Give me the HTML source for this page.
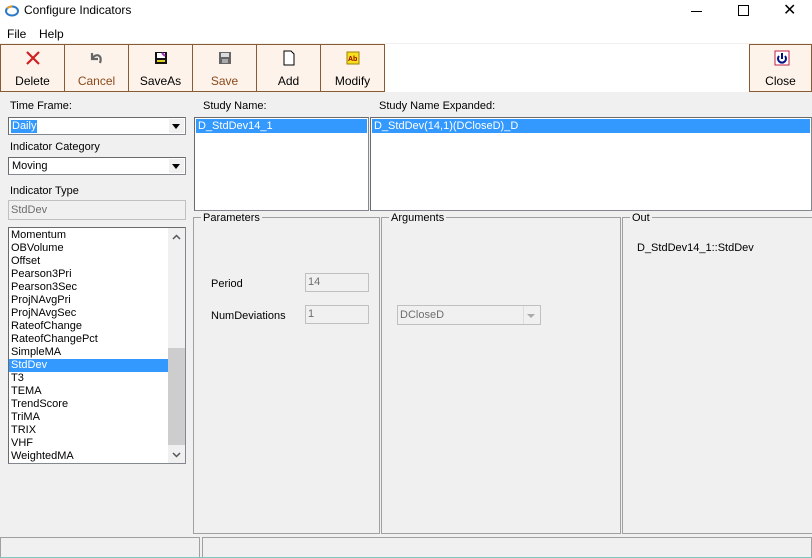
<!DOCTYPE html>
<html><head><meta charset="utf-8"><style>
*{margin:0;padding:0;box-sizing:border-box}
body{width:812px;height:558px;overflow:hidden;background:#f0f0f0;font-family:"Liberation Sans",sans-serif;font-size:11px;color:#000;position:relative}
.a{position:absolute}
.btn{position:absolute;top:44px;height:48px;width:65px;background:#fdf3eb;border:1px solid #8a5a32;text-align:center}
.btn .l{position:absolute;left:0;right:0;top:29px;font-size:12px}
.btn svg{position:absolute;left:24px;top:5px}
.box{position:absolute;background:#fff;border:1px solid #828790;border-top-color:#6a6a6a;border-left-color:#6a6a6a}
.sel{background:#3399ff;color:#fff}
.grp{position:absolute;border:1px solid #a0a0a0}
.grp .t{position:absolute;top:-5px;left:8px;background:#f0f0f0;padding:0 2px;line-height:11px}
.li{height:13px;line-height:13px;padding-left:2px}
.dis{position:absolute;background:#f0f0f0;border:1px solid #c0c0c0;color:#6d6d6d;padding-left:2px}
.arr{position:absolute;right:1px;top:1px;width:15px;height:14px;background:#f0f0f0}
.arr i{position:absolute;left:3px;top:5px;border-left:4.5px solid transparent;border-right:4.5px solid transparent;border-top:5px solid #000}
</style></head><body>
<div class="a" style="left:0;top:0;width:812px;height:92px;background:#fff"></div>
<svg class="a" style="left:4px;top:5px" width="16" height="12"><ellipse cx="8" cy="6" rx="6" ry="4.5" fill="none" stroke="#2a7ac8" stroke-width="2"/><path d="M3 3 L8 1" stroke="#f0a020" stroke-width="2"/></svg>
<div class="a" style="left:24px;top:3px;font-size:12px">Configure Indicators</div>
<div class="a" style="left:691px;top:11px;width:11px;height:1px;background:#000"></div>
<div class="a" style="left:738px;top:5px;width:11px;height:11px;border:1px solid #000"></div>
<div class="a" style="left:783px;top:0px;font-size:16px">✕</div>
<div class="a" style="left:7px;top:27px;font-size:12px">File</div>
<div class="a" style="left:39px;top:27px;font-size:12px">Help</div>
<div class="a" style="left:0;top:43px;width:812px;height:1px;background:#f0f0f0"></div>

<div class="btn" style="left:0"><svg width="16" height="16"><path d="M2 2L14 14M14 2L2 14" stroke="#d02020" stroke-width="2.2"/></svg><div class="l">Delete</div></div>
<div class="btn" style="left:64px"><svg width="16" height="16"><path d="M3 3 L3 9 L9 9" fill="none" stroke="#666" stroke-width="2.2"/><path d="M3 9 C6 3 14 4 11 13" fill="none" stroke="#666" stroke-width="2.2"/></svg><div class="l" style="color:#8a4a1a">Cancel</div></div>
<div class="btn" style="left:128px"><svg width="16" height="16"><rect x="2" y="2" width="12" height="12" fill="#111"/><rect x="4" y="3" width="8" height="5" fill="#fff"/><rect x="4" y="10" width="8" height="2" fill="#e0d020"/><path d="M9 3 L12 6" stroke="#a030c0" stroke-width="2"/></svg><div class="l">SaveAs</div></div>
<div class="btn" style="left:192px"><svg width="16" height="16"><rect x="2" y="2" width="12" height="12" fill="#666"/><rect x="4" y="3" width="8" height="4" fill="#ddd"/><rect x="5" y="9" width="6" height="4" fill="#aaa"/></svg><div class="l" style="color:#8a4a1a">Save</div></div>
<div class="btn" style="left:256px"><svg width="16" height="16"><path d="M3 1H10L13 4V15H3Z" fill="#fff" stroke="#000"/></svg><div class="l">Add</div></div>
<div class="btn" style="left:320px"><svg width="16" height="16"><rect x="2" y="2" width="12" height="12" fill="#f5e020" stroke="#a08000"/><text x="3" y="11" font-size="7" font-family="Liberation Sans" fill="#a00000" font-weight="bold">Ab</text></svg><div class="l">Modify</div></div>
<div class="btn" style="left:749px;width:63px"><svg width="16" height="16"><rect x="1" y="1" width="14" height="14" fill="#fff" stroke="#c02040"/><path d="M5 6 A4 4 0 1 0 11 6" fill="none" stroke="#001080" stroke-width="2"/><path d="M8 3V9" stroke="#001080" stroke-width="2"/></svg><div class="l">Close</div></div>

<div class="a" style="left:10px;top:100px">Time Frame:</div>
<div class="box" style="left:8px;top:117px;width:178px;height:18px"><div class="a sel" style="left:2px;top:2px;height:13px;line-height:13px;padding:0 1px">Daily</div><div class="arr"><i></i></div></div>
<div class="a" style="left:10px;top:141px">Indicator Category</div>
<div class="box" style="left:8px;top:157px;width:178px;height:18px"><div class="a" style="left:3px;top:2px;line-height:13px">Moving</div><div class="arr"><i></i></div></div>
<div class="a" style="left:10px;top:185px">Indicator Type</div>
<div class="dis" style="left:8px;top:200px;width:178px;height:20px;line-height:18px">StdDev</div>

<div class="box" style="left:8px;top:227px;width:178px;height:237px;padding-top:1px">
<div class="a" style="right:0;top:0;width:17px;height:235px;background:#f0f0f0"></div>
<div class="a" style="right:0;top:120px;width:17px;height:97px;background:#cdcdcd"></div>
<svg class="a" style="right:4px;top:6px" width="9" height="6"><path d="M1 5 L4.5 1.5 L8 5" fill="none" stroke="#555" stroke-width="1.5"/></svg>
<svg class="a" style="right:4px;top:224px" width="9" height="6"><path d="M1 1 L4.5 4.5 L8 1" fill="none" stroke="#555" stroke-width="1.5"/></svg>
<div style="width:160px">
<div class="li">Momentum</div><div class="li">OBVolume</div><div class="li">Offset</div><div class="li">Pearson3Pri</div><div class="li">Pearson3Sec</div><div class="li">ProjNAvgPri</div><div class="li">ProjNAvgSec</div><div class="li">RateofChange</div><div class="li">RateofChangePct</div><div class="li">SimpleMA</div><div class="li sel">StdDev</div><div class="li">T3</div><div class="li">TEMA</div><div class="li">TrendScore</div><div class="li">TriMA</div><div class="li">TRIX</div><div class="li">VHF</div><div class="li">WeightedMA</div>
</div></div>

<div class="a" style="left:203px;top:100px">Study Name:</div>
<div class="box" style="left:194px;top:117px;width:175px;height:94px"><div class="sel li" style="margin:1px;height:14px;line-height:14px">D_StdDev14_1</div></div>
<div class="a" style="left:379px;top:100px">Study Name Expanded:</div>
<div class="box" style="left:370px;top:117px;width:442px;height:94px"><div class="sel li" style="margin:1px;height:14px;line-height:14px">D_StdDev(14,1)(DCloseD)_D</div></div>

<div class="grp" style="left:193px;top:217px;width:187px;height:317px"><div class="t" style="left:7px">Parameters</div>
<div class="a" style="left:17px;top:60px">Period</div>
<div class="dis" style="left:111px;top:55px;width:64px;height:19px;line-height:17px">14</div>
<div class="a" style="left:17px;top:92px">NumDeviations</div>
<div class="dis" style="left:111px;top:87px;width:64px;height:19px;line-height:17px">1</div>
</div>
<div class="grp" style="left:381px;top:217px;width:240px;height:317px"><div class="t" style="left:7px">Arguments</div>
<div class="dis" style="left:15px;top:87px;width:144px;height:20px;line-height:18px">DCloseD<div class="a" style="right:0;top:0;width:17px;height:18px;border-left:1px solid #ddd"></div><div class="a" style="right:5px;top:8px;border-left:4px solid transparent;border-right:4px solid transparent;border-top:4px solid #aaa"></div></div>
</div>
<div class="grp" style="left:622px;top:217px;width:192px;height:317px"><div class="t" style="left:7px">Out</div>
<div class="a" style="left:14px;top:24px">D_StdDev14_1::StdDev</div>
</div>

<div class="a" style="left:0;top:537px;width:200px;height:20px;border:1px solid #a0a0a0;border-bottom:none"></div>
<div class="a" style="left:202px;top:537px;width:610px;height:20px;border:1px solid #a0a0a0;border-bottom:none"></div>
<div class="a" style="left:0;top:557px;width:812px;height:1px;background:#7fc8c0"></div>
</body></html>
